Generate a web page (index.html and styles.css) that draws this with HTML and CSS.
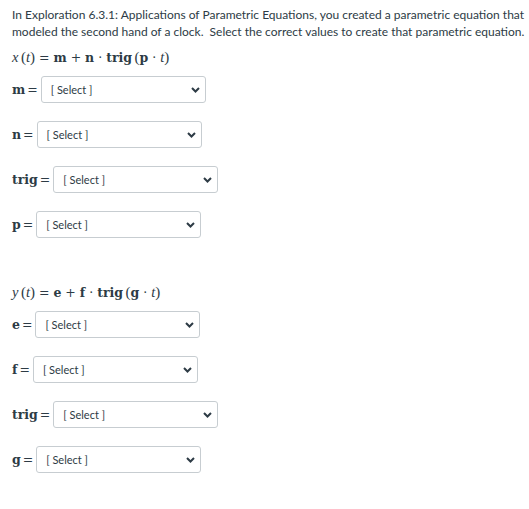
FILE: index.html
```html
<!DOCTYPE html>
<html>
<head>
<meta charset="utf-8">
<link rel="stylesheet" href="styles.css">
</head>
<body>
<div class="page">
  <p class="intro">In Exploration 6.3.1: Applications of Parametric Equations, you created a parametric equation that modeled the second hand of a clock.&nbsp; Select the correct values to create that parametric equation.</p>

  <div class="formula"><span class="it">x</span>&thinsp;<span class="paren">(</span><span class="it">t</span><span class="paren">)</span> <span class="op">=</span> <span class="bf">m</span> <span class="op">+</span> <span class="bf">n</span> <span class="op">·</span> <span class="bf">trig</span>&thinsp;<span class="paren">(</span><span class="bf">p</span> <span class="op">·</span> <span class="it">t</span><span class="paren">)</span></div>

  <div class="rows">
    <div class="row"><span class="bf">m</span><span class="eq">=</span><div class="sel">[ Select ]<span class="chev"><svg width="9" height="6" viewBox="0 0 9 6"><path d="M1 1 L4.5 4.5 L8 1" fill="none" stroke="#2d3b45" stroke-width="2"/></svg></span></div></div>
    <div class="row"><span class="bf">n</span><span class="eq">=</span><div class="sel">[ Select ]<span class="chev"><svg width="9" height="6" viewBox="0 0 9 6"><path d="M1 1 L4.5 4.5 L8 1" fill="none" stroke="#2d3b45" stroke-width="2"/></svg></span></div></div>
    <div class="row"><span class="bf">trig</span><span class="eq">=</span><div class="sel">[ Select ]<span class="chev"><svg width="9" height="6" viewBox="0 0 9 6"><path d="M1 1 L4.5 4.5 L8 1" fill="none" stroke="#2d3b45" stroke-width="2"/></svg></span></div></div>
    <div class="row"><span class="bf">p</span><span class="eq">=</span><div class="sel">[ Select ]<span class="chev"><svg width="9" height="6" viewBox="0 0 9 6"><path d="M1 1 L4.5 4.5 L8 1" fill="none" stroke="#2d3b45" stroke-width="2"/></svg></span></div></div>
  </div>

  <div class="formula second"><span class="it">y</span>&thinsp;<span class="paren">(</span><span class="it">t</span><span class="paren">)</span> <span class="op">=</span> <span class="bf">e</span> <span class="op">+</span> <span class="bf">f</span> <span class="op">·</span> <span class="bf">trig</span>&thinsp;<span class="paren">(</span><span class="bf">g</span> <span class="op">·</span> <span class="it">t</span><span class="paren">)</span></div>

  <div class="rows">
    <div class="row"><span class="bf">e</span><span class="eq">=</span><div class="sel">[ Select ]<span class="chev"><svg width="9" height="6" viewBox="0 0 9 6"><path d="M1 1 L4.5 4.5 L8 1" fill="none" stroke="#2d3b45" stroke-width="2"/></svg></span></div></div>
    <div class="row"><span class="bf">f</span><span class="eq">=</span><div class="sel">[ Select ]<span class="chev"><svg width="9" height="6" viewBox="0 0 9 6"><path d="M1 1 L4.5 4.5 L8 1" fill="none" stroke="#2d3b45" stroke-width="2"/></svg></span></div></div>
    <div class="row"><span class="bf">trig</span><span class="eq">=</span><div class="sel">[ Select ]<span class="chev"><svg width="9" height="6" viewBox="0 0 9 6"><path d="M1 1 L4.5 4.5 L8 1" fill="none" stroke="#2d3b45" stroke-width="2"/></svg></span></div></div>
    <div class="row"><span class="bf">g</span><span class="eq">=</span><div class="sel">[ Select ]<span class="chev"><svg width="9" height="6" viewBox="0 0 9 6"><path d="M1 1 L4.5 4.5 L8 1" fill="none" stroke="#2d3b45" stroke-width="2"/></svg></span></div></div>
  </div>
</div>
</body>
</html>
```

FILE: styles.css
```css
html, body {
  margin: 0;
  padding: 0;
  background: #ffffff;
}
.page {
  padding: 6px 4px 0 12px;
  color: #2d3b45;
  font-family: Lato, "Liberation Sans", sans-serif;
}
.intro {
  margin: 0;
  font-size: 12px;
  line-height: 17px;
}
.formula {
  margin-top: 7px;
  font-family: "DejaVu Serif", serif;
  font-size: 12.5px;
  line-height: 20px;
  height: 20px;
  color: #2d3b45;
  white-space: nowrap;
}
.formula.second {
  margin-top: 44px;
}
.it {
  font-style: italic;
  font-family: "Liberation Serif", serif;
  font-size: 14.5px;
}
.bf {
  font-weight: bold;
  font-family: "DejaVu Serif", serif;
}
.paren {
  font-family: "Liberation Serif", serif;
  font-size: 15px;
}
.op {
  font-family: "DejaVu Serif", serif;
}
.rows {
  display: flex;
  flex-direction: column;
  gap: 18px;
  margin-top: 9px;
}
.row {
  display: flex;
  align-items: center;
  font-family: "DejaVu Serif", serif;
  font-size: 12.5px;
}
.eq {
  margin: 0 3px 0 2px;
}
.sel {
  width: 165px;
  height: 27px;
  box-sizing: border-box;
  border: 1px solid #c7cdd1;
  border-radius: 3px;
  display: flex;
  align-items: center;
  justify-content: space-between;
  padding: 0 5px 0 9px;
  font-family: Lato, "Liberation Sans", sans-serif;
  font-size: 11px;
  color: #2d3b45;
  background: #fff;
}
.chev {
  display: flex;
  align-items: center;
}
```
